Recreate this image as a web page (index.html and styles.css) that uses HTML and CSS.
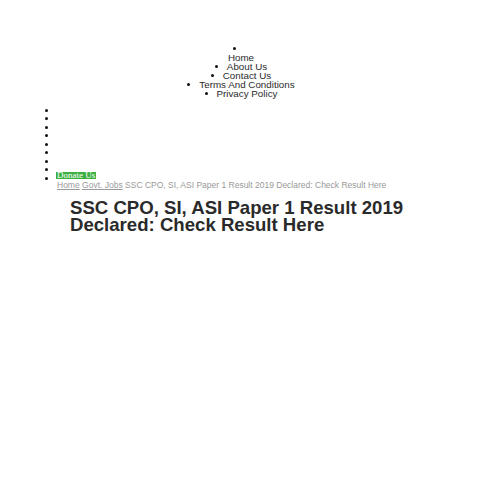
FILE: index.html
```html
<!DOCTYPE html>
<html>
<head>
<meta charset="utf-8">
<link rel="stylesheet" href="styles.css">
</head>
<body>
<ul class="topnav">
  <li><div>Home</div></li>
  <li>About Us</li>
  <li>Contact Us</li>
  <li>Terms And Conditions</li>
  <li>Privacy Policy</li>
</ul>
<ul class="side">
  <li></li>
  <li></li>
  <li></li>
  <li></li>
  <li></li>
  <li></li>
  <li></li>
  <li></li>
  <li><span class="donate">Donate Us</span></li>
</ul>
<div class="crumbs"><a href="#">Home</a> <a href="#">Govt. Jobs</a> SSC CPO, SI, ASI Paper 1 Result 2019 Declared: Check Result Here</div>
<h1 class="title">SSC CPO, SI, ASI Paper 1 Result 2019 Declared: Check Result Here</h1>
</body>
</html>
```
FILE: styles.css
```css
html, body {
  margin: 0;
  padding: 0;
  background: #fff;
}
body {
  font-family: "Liberation Sans", Arial, sans-serif;
  color: #111;
}
.topnav {
  list-style: none;
  margin: 44px 0 0 0;
  padding: 0 13px 0 0;
  text-align: center;
  font-size: 9.8px;
  line-height: 9px;
  color: #2a2a2a;
}
.topnav li::before {
  content: "";
  display: inline-block;
  width: 3px;
  height: 3px;
  border-radius: 50%;
  background: #111;
  margin-right: 9px;
  vertical-align: 2px;
}
.topnav li:first-child::before {
  margin-right: 13px;
}
.side {
  list-style: none;
  margin: 8px 0 0 0;
  padding: 0 0 0 45px;
}
.side li {
  display: flex;
  align-items: center;
  height: 8.5px;
}
.side li::before {
  content: "";
  width: 3px;
  height: 3px;
  border-radius: 50%;
  background: #111;
  margin-right: 8px;
  flex: none;
}
.donate {
  display: inline-block;
  background: #3cb043;
  color: #fff;
  font-family: "Liberation Serif", "Times New Roman", serif;
  font-size: 9px;
  line-height: 7px;
  height: 7px;
  padding: 0 1px;
  margin-top: -5px;
}
.crumbs {
  margin: -2px 0 0 57px;
  font-size: 8.5px;
  line-height: 9px;
  color: #999;
}
.crumbs a {
  color: #999;
  text-decoration: underline;
}
.title {
  margin: 9px 0 0 70px;
  font-size: 18.6px;
  line-height: 17px;
  font-weight: bold;
  color: #2a2a2a;
  max-width: 370px;
}
```
